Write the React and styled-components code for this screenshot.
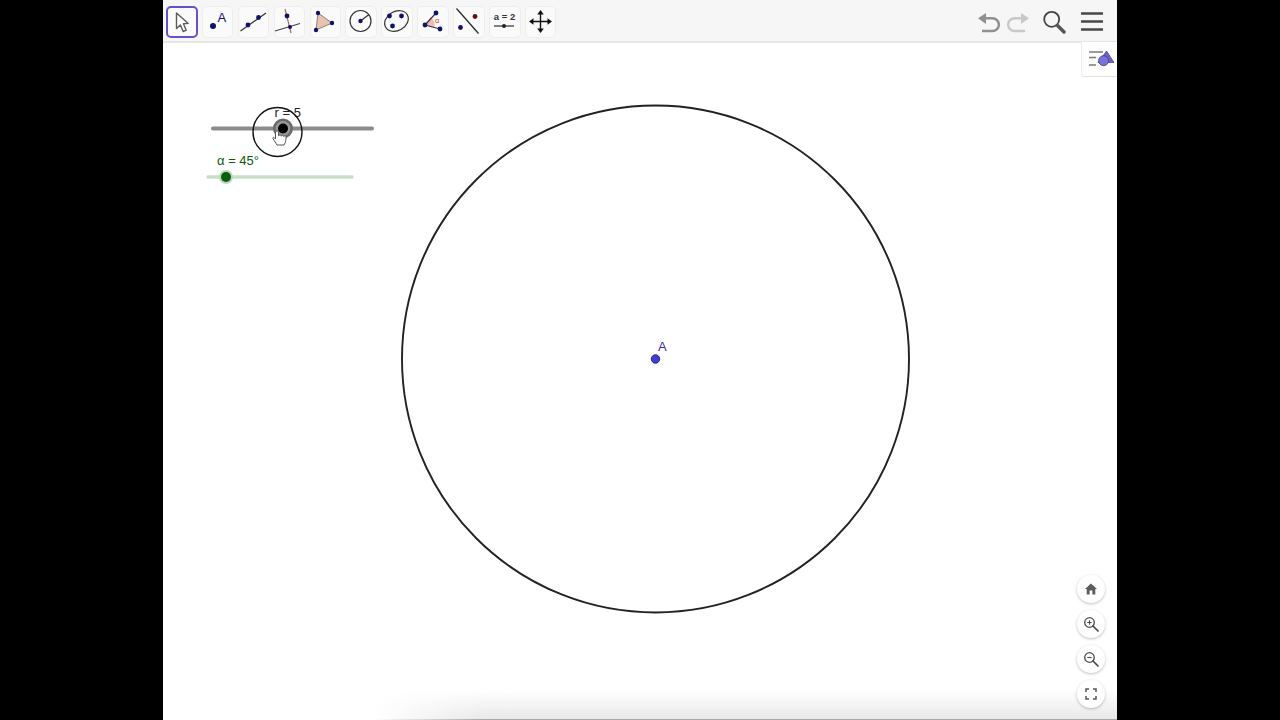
import React from "react";
import styled, { createGlobalStyle } from "styled-components";

const Global = createGlobalStyle`
  html, body { margin: 0; padding: 0; background: #000; height: 100%; overflow: hidden; }
  #root { height: 100%; }
`;

const Frame = styled.div`
  display: flex;
  justify-content: center;
  width: 1280px;
  height: 720px;
  background: #000;
  font-family: "Liberation Sans", Arial, sans-serif;
`;

const Applet = styled.main`
  display: flex;
  flex-direction: column;
  width: 954px;
  height: 720px;
  background: #fff;
  overflow: hidden;
`;

const Toolbar = styled.header`
  flex: 0 0 43px;
  box-sizing: border-box;
  height: 43px;
  display: flex;
  align-items: flex-start;
  justify-content: space-between;
  padding: 6px 14px 0 3px;
  background: #f6f6f6;
  border-bottom: 2px solid #e6e6e6;
`;

const Tools = styled.div`
  display: flex;
  gap: 4.4px;
`;

const Tool = styled.button`
  width: 31.5px;
  height: 31.5px;
  padding: 0;
  box-sizing: border-box;
  background: #fafafa;
  border: ${(p) => (p.$active ? "2px solid #6254c8" : "1px solid #eeeeee")};
  border-radius: 5px;
  display: flex;
  align-items: center;
  justify-content: center;
`;

const ToolIcon = styled.svg`
  width: 32px;
  height: 32px;
  flex: none;
  overflow: visible;
  font-family: "Liberation Sans", Arial, sans-serif;
`;

const Actions = styled.div`
  display: flex;
  align-items: center;
  height: 32px;
`;

const ActionIcon = styled.svg`
  display: block;
  margin-left: ${(p) => p.$gap}px;
`;

const Canvas = styled.section`
  position: relative;
  flex: 1;
`;

const Drawing = styled.svg`
  display: block;
  width: 954px;
  height: 677px;
  font-family: "Liberation Sans", Arial, sans-serif;
`;

const StyleToggle = styled.div`
  position: absolute;
  top: -1px;
  right: 0;
  width: 36px;
  height: 35px;
  box-sizing: border-box;
  background: #fff;
  border-left: 1px solid #ececec;
  border-bottom: 1px solid #e0e0e0;
  border-bottom-left-radius: 4px;
  display: flex;
  align-items: center;
  justify-content: center;
`;

const BottomFade = styled.div`
  position: absolute;
  left: 210px;
  right: 0;
  bottom: 0;
  height: 30px;
  background: linear-gradient(to bottom, rgba(236,236,236,0), #e9e9e9 96%, #a9a9a9 96%);
  -webkit-mask-image: linear-gradient(to right, transparent, #000 110px);
  mask-image: linear-gradient(to right, transparent, #000 110px);
  pointer-events: none;
`;

const ZoomPanel = styled.div`
  position: absolute;
  right: 12.5px;
  bottom: 12px;
  display: flex;
  flex-direction: column;
  gap: 7px;
`;

const ZoomButton = styled.button`
  width: 28px;
  height: 28px;
  padding: 0;
  border: none;
  border-radius: 50%;
  background: #fff;
  box-shadow: 0 1px 3px rgba(0, 0, 0, 0.25);
  display: flex;
  align-items: center;
  justify-content: center;
`;

const navy = "#11116a";
const Dot = ({ x, y, r = 2.4, c = navy }) => <circle cx={x} cy={y} r={r} fill={c} />;

const tools = [
  <>
    <path d="M10.5 7 L10.5 22.5 L14.4 19 L17.2 25.5 L20.2 24.2 L17.4 17.8 L22.2 17.4 Z" fill="#fff" stroke="#5a5a5a" strokeWidth="1.4" strokeLinejoin="round" />
  </>,
  <>
    <Dot x={11} y={20} r={3} />
    <text x={15.5} y={15.5} fontSize="13" fill={navy}>A</text>
  </>,
  <>
    <line x1={2.5} y1={25} x2={28} y2={7} stroke="#333" strokeWidth="1.2" />
    <Dot x={10} y={19} />
    <Dot x={20.5} y={11.5} />
  </>,
  <>
    <line x1={12} y1={3} x2={18} y2={27} stroke="#a9695a" strokeWidth="1.2" />
    <line x1={2} y1={25} x2={27} y2={17.5} stroke="#444" strokeWidth="1.2" />
    <Dot x={14} y={10} />
    <Dot x={17} y={21} r={2} />
  </>,
  <>
    <path d="M9 7 L23 17 L7 24 Z" fill="#e7c4b2" stroke="#8f7f78" strokeWidth="1" />
    <Dot x={9} y={7} r={2.2} />
    <Dot x={23} y={17} r={2.2} />
    <Dot x={7} y={24} r={2.2} />
  </>,
  <>
    <circle cx={15.5} cy={15} r={10.5} fill="none" stroke="#333" strokeWidth="1.2" />
    <line x1={15.5} y1={15} x2={24} y2={8.5} stroke="#333" strokeWidth="1.2" />
    <Dot x={15.5} y={15} r={2.2} />
  </>,
  <>
    <ellipse cx={15.5} cy={15} rx={12.5} ry={9.5} transform="rotate(-30 15.5 15)" fill="none" stroke="#333" strokeWidth="1.2" />
    <Dot x={8.5} y={10} />
    <Dot x={20.5} y={10} />
    <Dot x={11.5} y={20} />
  </>,
  <>
    <path d="M8 19 L13.5 11 A9 9 0 0 1 17 21.5 Z" fill="#f3b9b9" />
    <line x1={8} y1={19} x2={19} y2={7} stroke="#333" strokeWidth="1.2" />
    <line x1={8} y1={19} x2={23} y2={23} stroke="#333" strokeWidth="1.2" />
    <Dot x={8} y={19} />
    <Dot x={19} y={7} />
    <Dot x={23} y={23} />
    <text x={18} y={17} fontSize="7.5" fill="#c43d3d">α</text>
  </>,
  <>
    <line x1={3.5} y1={2.5} x2={25.5} y2={27.5} stroke="#222" strokeWidth="1.2" />
    <Dot x={22} y={10.5} c="#651010" />
    <Dot x={7.5} y={21.5} />
  </>,
  <>
    <text x={15.5} y={14} fontSize="9.5" fontWeight="700" textAnchor="middle" fill="#333">a = 2</text>
    <line x1={5} y1={20} x2={25} y2={20} stroke="#333" strokeWidth="1.2" />
    <Dot x={15} y={20} r={2} c="#222" />
  </>,
  <>
    <path d="M15.5 6 V25 M6 15.5 H25" stroke="#111" strokeWidth="1.4" />
    <path d="M15.5 4 L18.8 8.5 H12.2 Z M15.5 27 L18.8 22.5 H12.2 Z M4 15.5 L8.5 12.2 V18.8 Z M27 15.5 L22.5 12.2 V18.8 Z" fill="#111" />
  </>,
];

const Undo = ({ c, flip, gap }) => (
  <ActionIcon $gap={gap} width="24" height="22" viewBox="0 0 24 22">
    <g transform={flip ? "translate(24 0) scale(-1 1)" : undefined} fill="none" stroke={c} strokeWidth="2.4">
      <path d="M6 7.3 H15.5 A6.35 6.35 0 0 1 15.5 20 H5" />
      <path d="M1 7.3 L9 2 V13 Z" fill={c} stroke="none" />
    </g>
  </ActionIcon>
);

const Home = () => (
  <svg width="14" height="14" viewBox="0 0 14 14">
    <path d="M7 1.5 L13 7 H11.3 V12.5 H8.4 V8.6 H5.6 V12.5 H2.7 V7 H1 Z" fill="#5c5c5c" />
  </svg>
);

const Lens = ({ sign }) => (
  <svg width="16" height="16" viewBox="0 0 16 16" fill="none" stroke="#4a4a4a">
    <circle cx="6.5" cy="6.5" r="4.8" strokeWidth="1.3" />
    <path d="M10 10 L15 15" strokeWidth="1.7" strokeLinecap="round" />
    <path d={sign === "+" ? "M4.3 6.5 H8.7 M6.5 4.3 V8.7" : "M4.3 6.5 H8.7"} strokeWidth="1.1" />
  </svg>
);

const Fullscreen = () => (
  <svg width="12" height="12" viewBox="0 0 12 12" fill="none" stroke="#555" strokeWidth="1.5">
    <path d="M1 4 V1 H4 M8 1 H11 V4 M11 8 V11 H8 M4 11 H1 V8" />
  </svg>
);

export default function App() {
  return (
    <Frame>
      <Global />
      <Applet>
        <Toolbar>
          <Tools>
            {tools.map((t, i) => (
              <Tool key={i} $active={i === 0}>
                <ToolIcon viewBox="0 0 32 32">{t}</ToolIcon>
              </Tool>
            ))}
          </Tools>
          <Actions>
            <Undo c="#8f8f8f" />
            <Undo c="#c8c8c8" flip gap={5} />
            <ActionIcon $gap={12} width="24" height="24" viewBox="0 0 24 24" fill="none">
              <circle cx="9.7" cy="9.3" r="7.5" stroke="#444" strokeWidth="1.8" />
              <path d="M15.5 15.5 L22 22" stroke="#555" strokeWidth="3.4" strokeLinecap="round" />
            </ActionIcon>
            <ActionIcon $gap={15} width="22" height="20" viewBox="0 0 22 20">
              <path d="M0 1.5 H22 M0 9.5 H22 M0 17.5 H22" stroke="#484848" strokeWidth="2.6" />
            </ActionIcon>
          </Actions>
        </Toolbar>
        <Canvas>
          <Drawing viewBox="163 43 954 677">
            <circle cx="655.5" cy="359" r="253.5" fill="none" stroke="#222" strokeWidth="1.9" />
            <circle cx="655.5" cy="359" r="4.2" fill="#3f3fd4" stroke="#1f1f7a" strokeWidth="1" />
            <text x="658" y="351" fontSize="13" fill="#3a2ba8">A</text>

            <line x1="213" y1="128.5" x2="372" y2="128.5" stroke="#8b8b8b" strokeWidth="4" strokeLinecap="round" />
            <circle cx="283" cy="128.5" r="10" fill="#6a6a6a" />
            <circle cx="283" cy="128.5" r="7.4" fill="#9a9a9a" />
            <circle cx="283" cy="128.5" r="5" fill="#000" />
            <text x="274.5" y="117" fontSize="13" fill="#222">r = 5</text>
            <circle cx="277.5" cy="132" r="24.5" fill="none" stroke="#111" strokeWidth="1.4" />
            <path d="M275.5 132 V139 L274 137.5 C273 137 272.5 138 273.2 139 L277 145 H284 C286 142 286 139 286 136.5 C286 135.3 284.2 135.3 283.8 136.5 C283.6 134.8 281.8 134.8 281.4 136.2 C281.2 134.6 279.4 134.6 278.6 135.8 V132 C278.6 130.6 275.5 130.6 275.5 132 Z" fill="#fff" stroke="#555" strokeWidth="1" />

            <line x1="208" y1="177" x2="352" y2="177" stroke="#c7dfc7" strokeWidth="3.6" strokeLinecap="round" />
            <circle cx="226" cy="177" r="7" fill="#bcd8bc" />
            <circle cx="226" cy="177" r="5" fill="#0a600a" />
            <text x="217" y="165" fontSize="13" fill="#0a5c0a">α = 45°</text>
          </Drawing>

          <StyleToggle>
            <svg width="28" height="20" viewBox="0 0 28 20">
              <path d="M3 3 H17 M3 8.5 H10 M3 16 H10" stroke="#7a7a7a" strokeWidth="1.5" />
              <path d="M20.6 2 L28 13.5 H12 Z" fill="#6a63c9" stroke="#3e3a8e" strokeWidth="0.7" />
              <circle cx="17.6" cy="11.7" r="5" fill="#7a72d6" stroke="#3e3a8e" strokeWidth="0.8" />
            </svg>
          </StyleToggle>
          <BottomFade />
          <ZoomPanel>
            <ZoomButton><Home /></ZoomButton>
            <ZoomButton><Lens sign="+" /></ZoomButton>
            <ZoomButton><Lens sign="-" /></ZoomButton>
            <ZoomButton><Fullscreen /></ZoomButton>
          </ZoomPanel>
        </Canvas>
      </Applet>
    </Frame>
  );
}
